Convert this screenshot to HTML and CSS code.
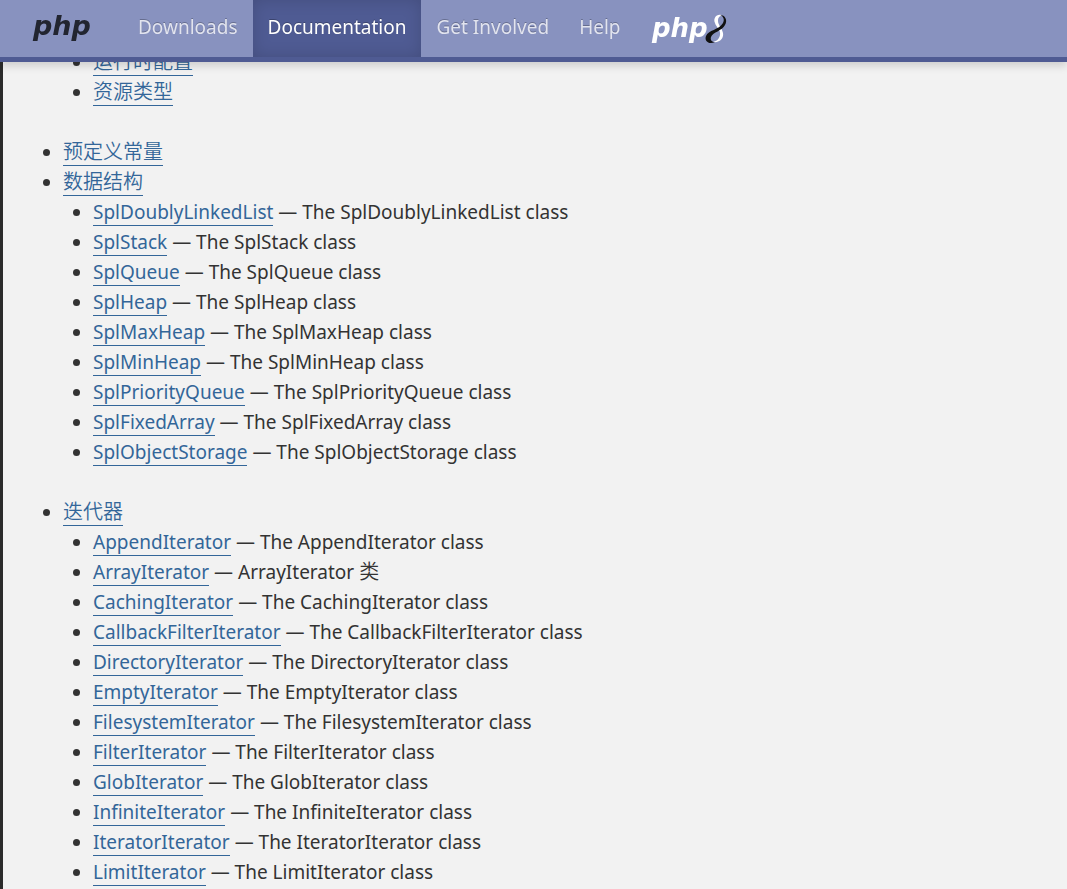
FILE: index.html
```html
<!DOCTYPE html>
<html lang="zh">
<head>
<meta charset="UTF-8">
<title>PHP: SPL - Manual</title>
<link rel="stylesheet" href="styles.css">
</head>
<body>

<nav class="navbar">
  <a class="brand" href="#" aria-label="php">
    <svg width="66" height="48" viewBox="0 0 66 48">
      <text class="logo-text" x="1" y="30" font-size="27">php</text>
    </svg>
  </a>
  <ul class="nav">
    <li><a href="#">Downloads</a></li>
    <li class="active"><a href="#">Documentation</a></li>
    <li><a href="#">Get Involved</a></li>
    <li><a href="#">Help</a></li>
    <li>
      <a class="php8" href="#" aria-label="php 8">
        <svg width="80" height="48" viewBox="0 0 80 48">
          <text class="logo-text" x="1" y="32" font-size="26">php</text>
          <!-- ribbon -->
          <path fill="#fff" d="M70 10C65 9 62 14 64 18C65 22 70 25 69 30C68 34 66 36 62 37C69 38 73 33 72 28C71 23 67 20 67 16C67 13 68 11 71 11Z"/>
          <path fill="#111" d="M69 10C74 10 77 15 74 20C71 26 62 27 60 32C59 35 61 37 64 37C58 40 53 36 55 31C57 25 68 25 72 18C74 14 72 11 69 10Z"/>
        </svg>
      </a>
    </li>
  </ul>
</nav>

<main class="layout">
  <ul class="chunklist">
    <li class="continued">
      <ul>
        <li><a href="#" class="zh">运行时配置</a></li>
        <li><a href="#" class="zh">资源类型</a></li>
      </ul>
    </li>
    <li><a href="#" class="zh">预定义常量</a></li>
    <li><a href="#" class="zh">数据结构</a>
      <ul>
        <li><a href="#">SplDoublyLinkedList</a> — The SplDoublyLinkedList class</li>
        <li><a href="#">SplStack</a> — The SplStack class</li>
        <li><a href="#">SplQueue</a> — The SplQueue class</li>
        <li><a href="#">SplHeap</a> — The SplHeap class</li>
        <li><a href="#">SplMaxHeap</a> — The SplMaxHeap class</li>
        <li><a href="#">SplMinHeap</a> — The SplMinHeap class</li>
        <li><a href="#">SplPriorityQueue</a> — The SplPriorityQueue class</li>
        <li><a href="#">SplFixedArray</a> — The SplFixedArray class</li>
        <li><a href="#">SplObjectStorage</a> — The SplObjectStorage class</li>
      </ul>
    </li>
    <li><a href="#" class="zh">迭代器</a>
      <ul>
        <li><a href="#">AppendIterator</a> — The AppendIterator class</li>
        <li><a href="#">ArrayIterator</a> — ArrayIterator <span class="zh">类</span></li>
        <li><a href="#">CachingIterator</a> — The CachingIterator class</li>
        <li><a href="#">CallbackFilterIterator</a> — The CallbackFilterIterator class</li>
        <li><a href="#">DirectoryIterator</a> — The DirectoryIterator class</li>
        <li><a href="#">EmptyIterator</a> — The EmptyIterator class</li>
        <li><a href="#">FilesystemIterator</a> — The FilesystemIterator class</li>
        <li><a href="#">FilterIterator</a> — The FilterIterator class</li>
        <li><a href="#">GlobIterator</a> — The GlobIterator class</li>
        <li><a href="#">InfiniteIterator</a> — The InfiniteIterator class</li>
        <li><a href="#">IteratorIterator</a> — The IteratorIterator class</li>
        <li><a href="#">LimitIterator</a> — The LimitIterator class</li>
      </ul>
    </li>
  </ul>
</main>

</body>
</html>
```
FILE: styles.css
```css
* { box-sizing: border-box; }

body {
  margin: 0;
  background: #f2f2f2;
  color: #333;
  font: 19px/30px "Noto Sans", "Noto Sans CJK SC", sans-serif;
}

/* NAVBAR */
.navbar {
  position: fixed;
  top: 0;
  left: 0;
  right: 0;
  z-index: 10;
  display: flex;
  height: 62px;
  padding-left: 32px;
  background: #8892bf;
  border-bottom: 5px solid #4f5b93;
  box-shadow: 0 4px 8px rgba(0, 0, 0, .15);
}

.brand {
  display: flex;
  align-items: center;
  width: 91px;
  color: #222530;
}

.logo-text {
  font-family: "DejaVu Sans", sans-serif;
  font-weight: bold;
  font-style: italic;
  fill: currentColor;
}

.nav {
  display: flex;
  margin: 0;
  padding: 0;
  list-style: none;
}

.nav a {
  display: flex;
  align-items: center;
  height: 57px;
  padding: 0 15px 3px;
  color: #e2e4ef;
  text-decoration: none;
  text-shadow: 0 -1px 0 rgba(0, 0, 0, .25);
}

.nav .active a {
  background: #4f5b93;
  color: #fff;
  box-shadow: inset 0 0 16px rgba(0, 0, 0, .15);
}

.nav .php8 {
  padding-bottom: 0;
  color: #fff;
  text-shadow: none;
}

/* CONTENT */
.layout {
  min-height: 100vh;
  padding: 47px 24px 0 30px;
  border-left: 3px solid #2b2b2b;
}

.chunklist,
.chunklist ul {
  margin: 0;
  padding-left: 30px;
  list-style: disc;
}

.chunklist ul {
  margin-bottom: 30px;
}

.chunklist .continued {
  list-style: none;
}

.chunklist a {
  color: #369;
  text-decoration: none;
  border-bottom: 1px solid #369;
}

.zh {
  font-size: 20px;
  font-weight: 350;
  line-height: 20px;
}
```
